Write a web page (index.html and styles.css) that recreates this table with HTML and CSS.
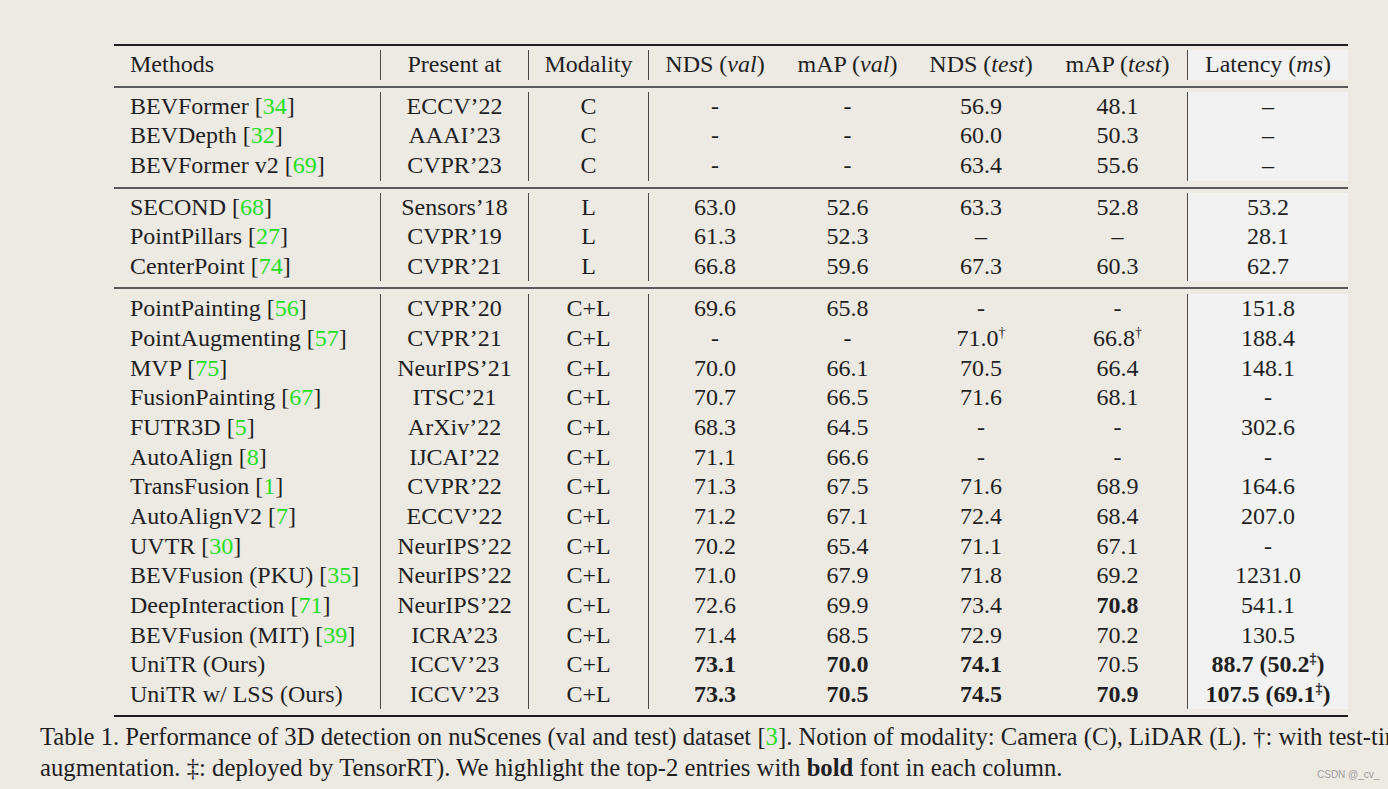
FILE: index.html
```html
<!DOCTYPE html>
<html>
<head>
<meta charset="utf-8">
<link rel="stylesheet" href="styles.css">
</head>
<body>
<div class="page">
  <div class="tbl">
    <div class="grp head">
      <div class="c m">Methods</div><div class="c bl">Present at</div><div class="c bl">Modality</div><div class="c bl">NDS (<i>val</i>)</div><div class="c">mAP (<i>val</i>)</div><div class="c">NDS (<i>test</i>)</div><div class="c">mAP (<i>test</i>)</div><div class="c bl lat">Latency (<i>ms</i>)</div>
    </div>
    <div class="grp">
      <div class="c m">BEVFormer [<span class="ref">34</span>]</div><div class="c bl">ECCV’22</div><div class="c bl">C</div><div class="c bl">-</div><div class="c">-</div><div class="c">56.9</div><div class="c">48.1</div><div class="c bl lat">–</div>
      <div class="c m">BEVDepth [<span class="ref">32</span>]</div><div class="c bl">AAAI’23</div><div class="c bl">C</div><div class="c bl">-</div><div class="c">-</div><div class="c">60.0</div><div class="c">50.3</div><div class="c bl lat">–</div>
      <div class="c m">BEVFormer v2 [<span class="ref">69</span>]</div><div class="c bl">CVPR’23</div><div class="c bl">C</div><div class="c bl">-</div><div class="c">-</div><div class="c">63.4</div><div class="c">55.6</div><div class="c bl lat">–</div>
    </div>
    <div class="grp">
      <div class="c m">SECOND [<span class="ref">68</span>]</div><div class="c bl">Sensors’18</div><div class="c bl">L</div><div class="c bl">63.0</div><div class="c">52.6</div><div class="c">63.3</div><div class="c">52.8</div><div class="c bl lat">53.2</div>
      <div class="c m">PointPillars [<span class="ref">27</span>]</div><div class="c bl">CVPR’19</div><div class="c bl">L</div><div class="c bl">61.3</div><div class="c">52.3</div><div class="c">–</div><div class="c">–</div><div class="c bl lat">28.1</div>
      <div class="c m">CenterPoint [<span class="ref">74</span>]</div><div class="c bl">CVPR’21</div><div class="c bl">L</div><div class="c bl">66.8</div><div class="c">59.6</div><div class="c">67.3</div><div class="c">60.3</div><div class="c bl lat">62.7</div>
    </div>
    <div class="grp">
      <div class="c m">PointPainting [<span class="ref">56</span>]</div><div class="c bl">CVPR’20</div><div class="c bl">C+L</div><div class="c bl">69.6</div><div class="c">65.8</div><div class="c">-</div><div class="c">-</div><div class="c bl lat">151.8</div>
      <div class="c m">PointAugmenting [<span class="ref">57</span>]</div><div class="c bl">CVPR’21</div><div class="c bl">C+L</div><div class="c bl">-</div><div class="c">-</div><div class="c">71.0<sup class="sx">†</sup></div><div class="c">66.8<sup class="sx">†</sup></div><div class="c bl lat">188.4</div>
      <div class="c m">MVP [<span class="ref">75</span>]</div><div class="c bl">NeurIPS’21</div><div class="c bl">C+L</div><div class="c bl">70.0</div><div class="c">66.1</div><div class="c">70.5</div><div class="c">66.4</div><div class="c bl lat">148.1</div>
      <div class="c m">FusionPainting [<span class="ref">67</span>]</div><div class="c bl">ITSC’21</div><div class="c bl">C+L</div><div class="c bl">70.7</div><div class="c">66.5</div><div class="c">71.6</div><div class="c">68.1</div><div class="c bl lat">-</div>
      <div class="c m">FUTR3D [<span class="ref">5</span>]</div><div class="c bl">ArXiv’22</div><div class="c bl">C+L</div><div class="c bl">68.3</div><div class="c">64.5</div><div class="c">-</div><div class="c">-</div><div class="c bl lat">302.6</div>
      <div class="c m">AutoAlign [<span class="ref">8</span>]</div><div class="c bl">IJCAI’22</div><div class="c bl">C+L</div><div class="c bl">71.1</div><div class="c">66.6</div><div class="c">-</div><div class="c">-</div><div class="c bl lat">-</div>
      <div class="c m">TransFusion [<span class="ref">1</span>]</div><div class="c bl">CVPR’22</div><div class="c bl">C+L</div><div class="c bl">71.3</div><div class="c">67.5</div><div class="c">71.6</div><div class="c">68.9</div><div class="c bl lat">164.6</div>
      <div class="c m">AutoAlignV2 [<span class="ref">7</span>]</div><div class="c bl">ECCV’22</div><div class="c bl">C+L</div><div class="c bl">71.2</div><div class="c">67.1</div><div class="c">72.4</div><div class="c">68.4</div><div class="c bl lat">207.0</div>
      <div class="c m">UVTR [<span class="ref">30</span>]</div><div class="c bl">NeurIPS’22</div><div class="c bl">C+L</div><div class="c bl">70.2</div><div class="c">65.4</div><div class="c">71.1</div><div class="c">67.1</div><div class="c bl lat">-</div>
      <div class="c m">BEVFusion (PKU) [<span class="ref">35</span>]</div><div class="c bl">NeurIPS’22</div><div class="c bl">C+L</div><div class="c bl">71.0</div><div class="c">67.9</div><div class="c">71.8</div><div class="c">69.2</div><div class="c bl lat">1231.0</div>
      <div class="c m">DeepInteraction [<span class="ref">71</span>]</div><div class="c bl">NeurIPS’22</div><div class="c bl">C+L</div><div class="c bl">72.6</div><div class="c">69.9</div><div class="c">73.4</div><div class="c"><b>70.8</b></div><div class="c bl lat">541.1</div>
      <div class="c m">BEVFusion (MIT) [<span class="ref">39</span>]</div><div class="c bl">ICRA’23</div><div class="c bl">C+L</div><div class="c bl">71.4</div><div class="c">68.5</div><div class="c">72.9</div><div class="c">70.2</div><div class="c bl lat">130.5</div>
      <div class="c m">UniTR (Ours)</div><div class="c bl">ICCV’23</div><div class="c bl">C+L</div><div class="c bl"><b>73.1</b></div><div class="c"><b>70.0</b></div><div class="c"><b>74.1</b></div><div class="c">70.5</div><div class="c bl lat"><b>88.7 (50.2<sup class="sx">‡</sup>)</b></div>
      <div class="c m">UniTR w/ LSS (Ours)</div><div class="c bl">ICCV’23</div><div class="c bl">C+L</div><div class="c bl"><b>73.3</b></div><div class="c"><b>70.5</b></div><div class="c"><b>74.5</b></div><div class="c"><b>70.9</b></div><div class="c bl lat"><b>107.5 (69.1<sup class="sx">‡</sup>)</b></div>
    </div>
  </div>
  <p class="caption">Table 1. Performance of 3D detection on nuScenes (val and test) dataset [<span class="ref">3</span>]. Notion of modality: Camera (C), LiDAR (L). †: with test-time<br>augmentation. ‡: deployed by TensorRT). We highlight the top-2 entries with <b>bold</b> font in each column.</p>
  <div class="wm">CSDN @_cv_</div>
</div>
</body>
</html>
```

FILE: styles.css
```css
html, body {
  margin: 0;
  padding: 0;
  overflow: hidden;
  background: #ede9e3;
}
.page {
  position: relative;
  width: 1388px;
  height: 789px;
  padding: 44px 0 0 40px;
  box-sizing: border-box;
  overflow: hidden;
  font-family: "Liberation Serif", "Times New Roman", serif;
  font-size: 24px;
  color: #1f1f1f;
}
.tbl {
  margin-left: 74px;
  width: 1234px;
  border-top: 2px solid #1e1e1e;
  border-bottom: 2px solid #1e1e1e;
}
.grp {
  display: grid;
  grid-template-columns: 266px 148px 120px 133px 133px 134px 139px 161px;
  grid-auto-rows: 29.65px;
  padding: 4px 0 6px;
  border-bottom: 2px solid #5a5a5a;
}
.grp.head {
  padding: 4px 0 6px;
}
.grp:last-child {
  border-bottom: none;
  padding-top: 5px;
}
.c {
  line-height: 29.65px;
  text-align: center;
  white-space: nowrap;
}
.c.m {
  text-align: left;
  padding-left: 16px;
}
.bl {
  border-left: 1.5px solid #4a4a4a;
}
.lat {
  background: #f2f2f2;
}
.ref {
  color: #1fe01f;
}
.sx {
  font-size: 14px;
  line-height: 0;
  vertical-align: 9px;
}
.caption {
  margin: 4px 0 0;
  width: 1348px;
  overflow: hidden;
  font-size: 24.7px;
  line-height: 31px;
  white-space: nowrap;
}
.wm {
  position: absolute;
  left: 1317px;
  top: 769px;
  font-family: "Liberation Sans", Arial, sans-serif;
  font-size: 10px;
  color: #a0a0a0;
}
```
